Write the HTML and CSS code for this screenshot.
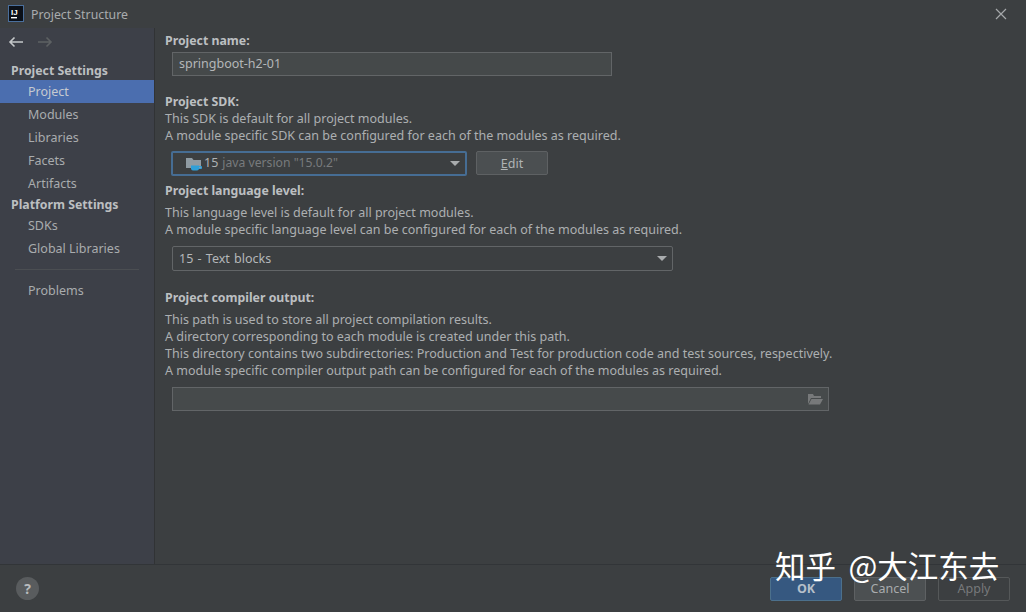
FILE: index.html
```
<!DOCTYPE html>
<html lang="en">
<head>
<meta charset="utf-8">
<title>Project Structure</title>
<link rel="stylesheet" href="styles.css">
</head>
<body>
<div class="dialog">
  <header class="titlebar">
    <svg class="app-icon" width="16" height="17" viewBox="0 0 16 17">
      <rect x="0.500" y="0.500" width="15" height="16" fill="#0b1018" stroke="#4a6f9c"/>
      <rect x="3" y="12" width="6" height="1.400" fill="#fff"/>
      <text x="3" y="9.500" class="app-icon-text">IJ</text>
    </svg>
    <span class="title">Project Structure</span>
    <svg class="close" width="12" height="12" viewBox="0 0 12 12"><path d="M1 1l10 10M11 1L1 11" stroke="#a5a8aa" stroke-width="1.200" fill="none"/></svg>
  </header>
  <div class="body">
    <nav class="sidebar">
      <div class="nav-arrows">
        <svg width="16" height="12" viewBox="0 0 16 12"><path d="M15 6H2M6.500 1.500L2 6l4.500 4.500" stroke="#c4c7c9" stroke-width="1.600" fill="none"/></svg>
        <svg width="16" height="12" viewBox="0 0 16 12"><path d="M1 6h13M9.500 1.500L14 6l-4.500 4.500" stroke="#5d6163" stroke-width="1.600" fill="none"/></svg>
      </div>
      <div class="nav-head first">Project Settings</div>
      <a class="nav-item active">Project</a>
      <a class="nav-item">Modules</a>
      <a class="nav-item">Libraries</a>
      <a class="nav-item">Facets</a>
      <a class="nav-item">Artifacts</a>
      <div class="nav-head">Platform Settings</div>
      <a class="nav-item">SDKs</a>
      <a class="nav-item">Global Libraries</a>
      <div class="nav-sep"></div>
      <a class="nav-item">Problems</a>
    </nav>
    <main class="content">
      <h2 class="label">Project name:</h2>
      <div class="field name-field">springboot-h2-01</div>

      <h2 class="label sdk-label">Project SDK:</h2>
      <p class="text">This SDK is default for all project modules.</p>
      <p class="text">A module specific SDK can be configured for each of the modules as required.</p>
      <div class="sdk-row">
        <div class="field combo sdk-combo">
          <svg class="sdk-icon" width="17" height="16" viewBox="0 0 17 16">
            <path d="M0 2h6l1.500 2H15v8H0z" fill="#8f9ba3"/>
            <path d="M5 9.500h8v3a2 2 0 0 1-2 2H7a2 2 0 0 1-2-2z" fill="#2f9fd8"/>
            <path d="M13 10.500h2.500v2H13" fill="none" stroke="#2f9fd8"/>
          </svg>
          <span class="sdk-num">15</span><span class="sdk-ver">java version "15.0.2"</span>
          <span class="caret"></span>
        </div>
        <button class="btn edit"><u>E</u>dit</button>
      </div>

      <h2 class="label lang-label">Project language level:</h2>
      <p class="text lang-first">This language level is default for all project modules.</p>
      <p class="text">A module specific language level can be configured for each of the modules as required.</p>
      <div class="field combo lang-combo"><span class="lang-value">15 - Text blocks</span><span class="caret"></span></div>

      <h2 class="label out-label">Project compiler output:</h2>
      <p class="text out-first">This path is used to store all project compilation results.</p>
      <p class="text">A directory corresponding to each module is created under this path.</p>
      <p class="text">This directory contains two subdirectories: Production and Test for production code and test sources, respectively.</p>
      <p class="text">A module specific compiler output path can be configured for each of the modules as required.</p>
      <div class="field out-field">
        <svg width="16" height="12" viewBox="0 0 16 12"><path d="M1 1h5l1 2h7v2H4L1 11z" fill="#77797a"/><path d="M4.500 6H16l-3 5.500H1.500z" fill="#77797a"/></svg>
      </div>
    </main>
  </div>
  <footer class="footer">
    <span class="help">?</span>
    <div class="actions">
      <button class="btn ok">OK</button>
      <button class="btn cancel">Cancel</button>
      <button class="btn apply">Apply</button>
    </div>
  </footer>
  <div class="watermark">知乎 @大江东去</div>
</div>
</body>
</html>
```
FILE: styles.css
```
* { box-sizing: border-box; }
html, body { margin: 0; height: 100%; }
body {
  font-family: "Noto Sans", "Open Sans", sans-serif;
  font-size: 12.5px;
  color: #b4b7b9;
  background: #3c3f41;
  overflow: hidden;
}
.dialog { position: relative; width: 1026px; height: 612px; display: flex; flex-direction: column; background: #3c3f41; }
.titlebar { height: 28px; flex: none; display: flex; align-items: center; padding: 0 19px 0 8px; background: #3c3f41; }
.app-icon { flex: none; margin-right: 7px; margin-top: -1px; }
.app-icon-text { font: bold 8px "Liberation Sans", sans-serif; fill: #fff; }
.title { font-size: 12.3px; color: #a9acae; }
.close { margin-left: auto; }
.body { height: 537px; flex: none; display: flex; border-bottom: 1px solid #323538; }
.sidebar { width: 155px; flex: none; background: #3d4048; border-right: 1px solid #313335; padding-top: 7px; }
.nav-arrows { display: flex; gap: 13px; padding-left: 8px; height: 14px; align-items: center; margin-bottom: 13px; }
.nav-head { font-size: 12.3px; font-weight: 700; color: #bcbfc1; height: 17px; line-height: 17px; padding-left: 11px; }
.nav-head.first { margin-top: 7px; margin-bottom: 1px; }
.nav-head:not(.first) { margin-top: 1px; margin-bottom: 1px; }
.nav-item { display: block; height: 23px; line-height: 23px; padding-left: 28px; color: #a9acae; }
.nav-item.active { background: #4b6eaf; color: #c6cad0; }
.nav-sep { height: 1px; background: #4b4e52; margin: 9px 15px 9px 15px; }
.content { flex: 1; padding: 4px 0 0 10px; min-width: 0; }
.label { margin: 0; font-size: 12.3px; font-weight: 700; line-height: 17px; color: #bcbfc1; }
.text { margin: 0; font-size: 12.52px; line-height: 17px; color: #acafb1; white-space: nowrap; }
.field { height: 24px; margin-left: 7px; border: 1px solid #626567; background: #45494a; line-height: 22px; padding: 0 6px; color: #b4b7b9; position: relative; }
.name-field { width: 440px; margin-top: 3px; }
.sdk-label { margin-top: 17px; }
.sdk-row { display: flex; margin-top: 7px; height: 25px; align-items: flex-start; }
.combo { display: flex; align-items: center; background: #3c3f41; }
.sdk-combo { width: 296px; height: 25px; margin-left: 6px; border: 2px solid #466d94; border-radius: 2px; padding-left: 13px; padding-bottom: 2px; }
.sdk-icon { flex: none; margin-right: 1px; margin-top: 2px; }
.sdk-num { color: #aeb1b3; margin-right: 4px; }
.sdk-ver { font-size: 12.2px; color: #787b7d; }
.caret { margin-left: auto; width: 0; height: 0; border-left: 5px solid transparent; border-right: 5px solid transparent; border-top: 5px solid #a9acae; margin-right: -1px; }
.sdk-combo .caret { margin-top: 2px; }
.lang-value { word-spacing: 1px; }
.btn { font: inherit; width: 72px; height: 24px; padding: 0; border: 1px solid #5e6163; border-radius: 2px; background: #4b4f51; color: #b0b3b5; }
.edit { margin-left: 9px; }
.lang-label { margin-top: 6px; }
.lang-first { margin-top: 5px; }
.lang-combo { width: 501px; height: 25px; margin-top: 8px; border-radius: 2px; }
.out-label { margin-top: 18px; }
.out-first { margin-top: 5px; }
.out-field { width: 657px; margin-top: 8px; display: flex; align-items: center; justify-content: flex-end; padding-right: 5px; background: #464a4b; }
.footer { flex: 1; display: flex; align-items: center; justify-content: space-between; padding: 0 16px; }
.help { width: 23px; height: 23px; border-radius: 50%; background: #595c5e; color: #b8bbbd; font-weight: 700; font-size: 14px; line-height: 23px; text-align: center; }
.actions { display: flex; gap: 12px; }
.actions .btn { height: 24px; }
.ok { background: #365880; border-color: #4c708c; color: #b5bfc9; font-weight: 700; }
.cancel { background: #4c5052; color: #a9acae; }
.apply { background: transparent; border-color: #555859; color: #77797b; }
.watermark {
  position: absolute;
  left: 775px;
  top: 545px;
  font-family: "Noto Sans CJK SC", sans-serif;
  font-size: 30.5px;
  line-height: 40px;
  word-spacing: 5.6px;
  color: #fff;
  white-space: nowrap;
}
```
